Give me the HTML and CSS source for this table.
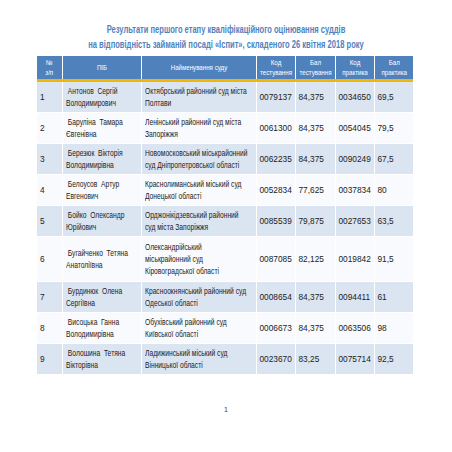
FILE: index.html
```html
<!DOCTYPE html>
<html lang="uk">
<head>
<meta charset="utf-8">
<link rel="stylesheet" href="styles.css">
</head>
<body>
<div class="page">
  <h1 class="title">Результати першого етапу кваліфікаційного оцінювання суддів<br>на відповідність займаній посаді «Іспит», складеного 26 квітня 2018 року</h1>
  <table class="results">
    <colgroup>
      <col class="c-num"><col class="c-name"><col class="c-court"><col class="c-k"><col class="c-b"><col class="c-k"><col class="c-b2">
    </colgroup>
    <thead>
      <tr>
        <th><div class="hd">№<br>з/п</div></th>
        <th><div class="hd">ПІБ</div></th>
        <th><div class="hd">Найменування суду</div></th>
        <th><div class="hd">Код<br>тестування</div></th>
        <th><div class="hd">Бал<br>тестування</div></th>
        <th><div class="hd">Код<br>практика</div></th>
        <th><div class="hd">Бал<br>практика</div></th>
      </tr>
    </thead>
    <tbody>
      <tr class="band"><td>1</td><td><div class="tx">&nbsp;Антонов&nbsp; Сергій<br>Володимирович</div></td><td><div class="tx">Октябрський районний суд міста<br>Полтави</div></td><td>0079137</td><td>84,375</td><td>0034650</td><td>69,5</td></tr>
      <tr><td>2</td><td><div class="tx">&nbsp;Баруліна&nbsp; Тамара<br>Євгенівна</div></td><td><div class="tx">Ленінський районний суд міста<br>Запоріжжя</div></td><td>0061300</td><td>84,375</td><td>0054045</td><td>79,5</td></tr>
      <tr class="band"><td>3</td><td><div class="tx">&nbsp;Березюк&nbsp; Вікторія<br>Володимирівна</div></td><td><div class="tx">Новомосковський міськрайонний<br>суд Дніпропетровської області</div></td><td>0062235</td><td>84,375</td><td>0090249</td><td>67,5</td></tr>
      <tr><td>4</td><td><div class="tx">&nbsp;Белоусов&nbsp; Артур<br>Евгенович</div></td><td><div class="tx">Краснолиманський міський суд<br>Донецької області</div></td><td>0052834</td><td>77,625</td><td>0037834</td><td>80</td></tr>
      <tr class="band"><td>5</td><td><div class="tx">&nbsp;Бойко&nbsp; Олександр<br>Юрійович</div></td><td><div class="tx">Орджонікідзевський районний<br>суд міста Запоріжжя</div></td><td>0085539</td><td>79,875</td><td>0027653</td><td>63,5</td></tr>
      <tr class="tall"><td>6</td><td><div class="tx">&nbsp;Бугайченко&nbsp; Тетяна<br>Анатоліївна</div></td><td><div class="tx">Олександрійський<br>міськрайонний суд<br>Кіровоградської області</div></td><td>0087085</td><td>82,125</td><td>0019842</td><td>91,5</td></tr>
      <tr class="band"><td>7</td><td><div class="tx">&nbsp;Бурдинюк&nbsp; Олена<br>Сергіївна</div></td><td><div class="tx">Красноокнянський районний суд<br>Одеської області</div></td><td>0008654</td><td>84,375</td><td>0094411</td><td>61</td></tr>
      <tr><td>8</td><td><div class="tx">&nbsp;Висоцька&nbsp; Ганна<br>Володимирівна</div></td><td><div class="tx">Обухівський районний суд<br>Київської області</div></td><td>0006673</td><td>84,375</td><td>0063506</td><td>98</td></tr>
      <tr class="band"><td>9</td><td><div class="tx">&nbsp;Волошина&nbsp; Тетяна<br>Вікторівна</div></td><td><div class="tx">Ладижинський міський суд<br>Вінницької області</div></td><td>0023670</td><td>83,25</td><td>0075714</td><td>92,5</td></tr>
    </tbody>
  </table>
  <div class="pagenum">1</div>
</div>
</body>
</html>
```
FILE: styles.css
```css
html, body {
  margin: 0;
  padding: 0;
  background: #ffffff;
}
.page {
  width: 452px;
  height: 452px;
  overflow: hidden;
  font-family: "Liberation Sans", Arial, sans-serif;
}
.title {
  margin: 22px 0 0 0;
  text-align: center;
  color: #4f81bd;
  font-size: 10.5px;
  line-height: 15px;
  font-weight: bold;
  white-space: nowrap;
  transform: scaleX(0.72);
  transform-origin: 226px 0;
}
.results {
  margin: 4px 0 0 37px;
  width: 376px;
  border-collapse: collapse;
  table-layout: fixed;
  font-size: 8.3px;
  color: #222222;
}
.c-num { width: 25px; }
.c-name { width: 79px; }
.c-court { width: 115px; }
.c-k { width: 39px; }
.c-b { width: 40px; }
.c-b2 { width: 39px; }
.results th {
  background: #4f81bd;
  color: #ffffff;
  font-weight: normal;
  font-size: 7px;
  line-height: 10px;
  height: 23px;
  padding: 0;
  text-align: center;
  vertical-align: middle;
  border-right: 1px solid #ffffff;
  border-bottom: 3px solid #f2b705;
}
.hd {
  white-space: nowrap;
  transform: scaleX(0.88);
  transform-origin: center;
}
.results td {
  height: 30px;
  padding: 0 2px 0 3px;
  line-height: 12px;
  vertical-align: middle;
  text-align: left;
  border-right: 1px solid #ffffff;
  border-bottom: 1px solid #ffffff;
  background: #f8fafd;
  white-space: nowrap;
}
.results th:last-child, .results td:last-child { border-right: none; }
.results tr.band td { background: #dbe5f1; }
.results tr.tall td { height: 44px; }
.tx {
  font-size: 8.6px;
  width: 128%;
  transform: scaleX(0.78);
  transform-origin: left center;
}
.pagenum {
  margin-top: 30px;
  text-align: center;
  font-size: 7px;
  line-height: 9px;
  color: #444444;
}
```
